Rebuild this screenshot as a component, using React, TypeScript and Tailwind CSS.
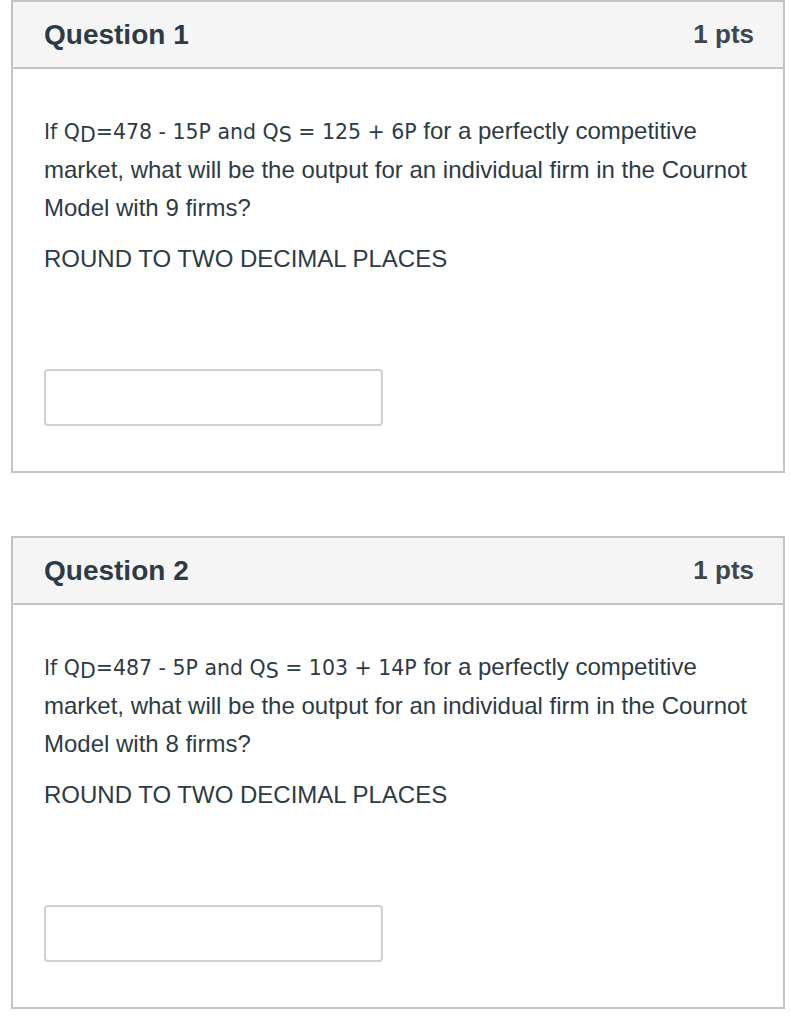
import React from 'react';

type Q = {
  num: number;
  qd: string;
  qs: string;
  firms: number;
};

const questions: Q[] = [
  { num: 1, qd: '478 - 15P', qs: '125 + 6P', firms: 9 },
  { num: 2, qd: '487 - 5P', qs: '103 + 14P', firms: 8 },
];

function QuestionCard({ q }: { q: Q }) {
  return (
    <div className="ml-[11px] w-[774px] border-2 border-[#c4c4c4] bg-white text-[#2d3b45]">
      <div className="flex h-[67px] items-center justify-between border-b-2 border-[#c4c4c4] bg-[#f5f5f5] pl-[31px] pr-[29px]">
        <h2 className="text-[28px] font-bold">Question {q.num}</h2>
        <div className="text-[26px] font-bold text-[#3d464d]">1 pts</div>
      </div>
      <div className="pl-[31px] pr-[15px] pt-[43px] pb-[45px] text-[24px] leading-[38px]">
        <p>
          <span className="font-['DejaVu_Sans','Verdana',sans-serif] text-[20.5px]">
            If Q<sub className="relative top-[3px] align-baseline text-[20.5px] leading-none">D</sub>={q.qd} and Q
            <sub className="relative top-[3px] align-baseline text-[20.5px] leading-none">S</sub> = {q.qs}
          </span>{' '}
          for a perfectly competitive market, what will be the output for an individual firm in the Cournot Model with {q.firms} firms?
        </p>
        <p className="mt-[13px]">ROUND TO TWO DECIMAL PLACES</p>
        <div className="mt-[91px]">
          <input
            type="text"
            className="block h-[57px] w-[339px] rounded-[4px] border-2 border-[#d0d0d0] bg-white outline-none"
          />
        </div>
      </div>
    </div>
  );
}

export default function App() {
  return (
    <div className="min-h-[1024px] bg-white pt-0 font-['Liberation_Sans','Helvetica','Arial',sans-serif]">
      <div className="flex flex-col gap-[63px]">
        {questions.map((q) => (
          <QuestionCard key={q.num} q={q} />
        ))}
      </div>
    </div>
  );
}
